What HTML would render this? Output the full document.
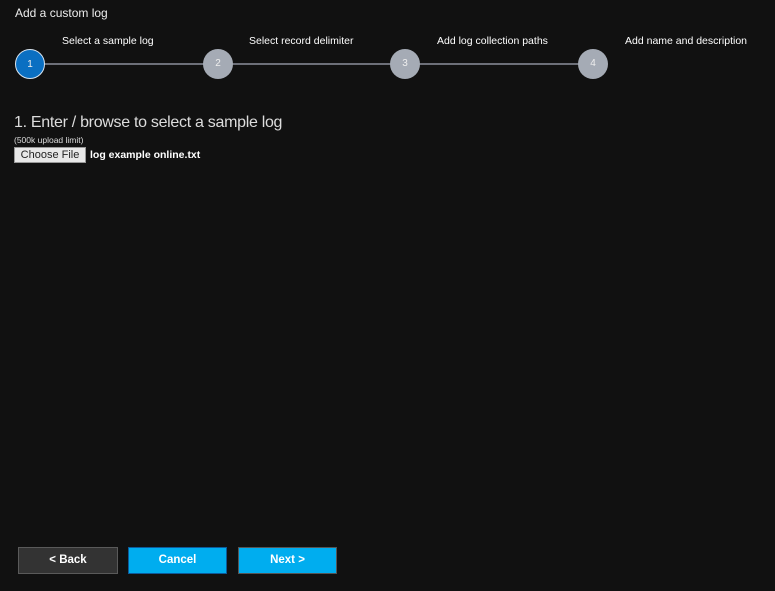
<!DOCTYPE html>
<html><head><style>
body{margin:0;width:775px;height:591px;background:#111111;font-family:"Liberation Sans",sans-serif;color:#fff;position:relative;overflow:hidden}
.a{position:absolute;white-space:nowrap}
.c{position:absolute;width:30px;height:30px;border-radius:50%;background:#a5abb5;top:49px;font-size:10px;line-height:30px;text-align:center;color:#eee;box-sizing:border-box}
.l{position:absolute;font-size:10.5px;top:35px}
.btn{position:absolute;top:547px;width:100px;height:27px;box-sizing:border-box;font-size:11.5px;font-weight:bold;line-height:25px;text-align:center;color:#fff}
</style></head><body>
<div class="a" style="left:15px;top:6px;font-size:12px;color:#eee">Add a custom log</div>
<div class="a" style="left:30px;top:63px;width:563px;height:2px;background:#6d7079"></div>
<div class="l a" style="left:62px">Select a sample log</div>
<div class="l a" style="left:249px">Select record delimiter</div>
<div class="l a" style="left:437px">Add log collection paths</div>
<div class="l a" style="left:625px">Add name and description</div>
<div class="c" style="left:15px;background:#0a6fc2;border:1.5px solid #d8e4f0">1</div>
<div class="c" style="left:203px">2</div>
<div class="c" style="left:390px">3</div>
<div class="c" style="left:578px">4</div>
<div class="a" style="left:14px;top:114px;font-size:16px;color:#ddd;letter-spacing:-0.3px">1. Enter / browse to select a sample log</div>
<div class="a" style="left:14px;top:135px;font-size:8.5px;color:#ddd">(500k upload limit)</div>
<div class="a" style="left:14px;top:147px;width:72px;height:16px;background:#e8e8e8;border:1px solid #999;box-sizing:border-box;color:#222;font-size:11px;line-height:14px;text-align:center">Choose File</div>
<div class="a" style="left:90px;top:149px;font-size:10.5px;font-weight:bold">log example online.txt</div>
<div class="btn" style="left:18px;background:#333;border:1px solid #5a5a5a">&lt; Back</div>
<div class="btn" style="left:128px;width:99px;background:#00adef;border:1px solid #0d5a9a">Cancel</div>
<div class="btn" style="left:238px;width:99px;background:#00adef;border:1px solid #555">Next &gt;</div>
</body></html>
